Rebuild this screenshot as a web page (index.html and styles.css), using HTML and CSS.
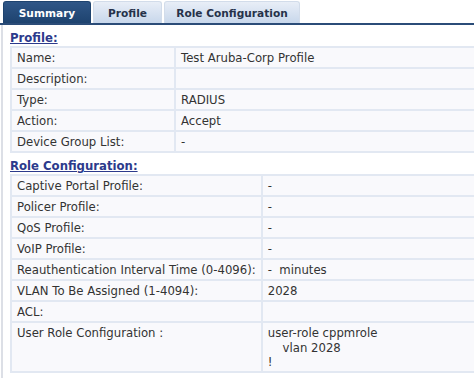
FILE: index.html
```html
<!DOCTYPE html>
<html>
<head>
<meta charset="utf-8">
<link rel="stylesheet" href="styles.css">
</head>
<body>
<div class="tabs">
  <div class="tab active tab-summary">Summary</div>
  <div class="tab tab-profile">Profile</div>
  <div class="tab tab-role">Role Configuration</div>
</div>
<div class="panel">
  <div class="section-title">Profile:</div>
  <table class="grid grid-profile">
    <tr><td class="label">Name:</td><td>Test Aruba-Corp Profile</td></tr>
    <tr><td class="label">Description:</td><td></td></tr>
    <tr><td class="label">Type:</td><td>RADIUS</td></tr>
    <tr><td class="label">Action:</td><td>Accept</td></tr>
    <tr><td class="label">Device Group List:</td><td>-</td></tr>
  </table>
  <div class="section-title">Role Configuration:</div>
  <table class="grid grid-role">
    <tr><td class="label">Captive Portal Profile:</td><td>-</td></tr>
    <tr><td class="label">Policer Profile:</td><td>-</td></tr>
    <tr><td class="label">QoS Profile:</td><td>-</td></tr>
    <tr><td class="label">VoIP Profile:</td><td>-</td></tr>
    <tr><td class="label">Reauthentication Interval Time (0-4096):</td><td>-&nbsp; minutes</td></tr>
    <tr><td class="label">VLAN To Be Assigned (1-4094):</td><td>2028</td></tr>
    <tr><td class="label">ACL:</td><td></td></tr>
    <tr class="tall"><td class="label">User Role Configuration :</td><td><pre class="config">user-role cppmrole
    vlan 2028
!</pre></td></tr>
  </table>
</div>
</body>
</html>
```
FILE: styles.css
```css
html, body {
  margin: 0;
  padding: 0;
  background: #ffffff;
  overflow: hidden;
}
body {
  font-family: "DejaVu Sans", Verdana, sans-serif;
  font-size: 11.7px;
  color: #333333;
  width: 474px;
  height: 378px;
}
.tabs {
  display: flex;
  gap: 2px;
  padding: 1px 0 0 3px;
  border-bottom: 2px solid #2b4c78;
  height: 22px;
}
.tab {
  display: flex;
  align-items: center;
  justify-content: center;
  font-size: 10.6px;
  font-weight: bold;
  color: #26324a;
  background: linear-gradient(#e8eef7, #c8d7eb);
  border: 1px solid #d2dcea;
  border-bottom: none;
  border-radius: 3px 3px 0 0;
}
.tab-summary { width: 86px; }
.tab-profile { width: 67px; }
.tab-role { width: 134px; }
.tab.active {
  background: linear-gradient(#2f5687, #1e436f);
  border-color: #1e436f;
  color: #ffffff;
}
.panel {
  margin-left: 1px;
  border-left: 2px solid #dcdfe6;
  padding: 7px 0 8px 7px;
}
.section-title {
  font-weight: bold;
  color: #2c3a8c;
  text-decoration: underline;
  line-height: 13px;
  margin-bottom: 1px;
}
.grid {
  border-collapse: collapse;
  width: 480px;
  background: #f9f9fc;
  margin-bottom: 7px;
}
.grid td {
  border: 2px solid #e2e8f2;
  height: 17px;
  padding: 1px 5px 1px 5px;
  vertical-align: middle;
  white-space: nowrap;
}
.grid-profile td.label { width: 152px; }
.grid-role td.label { width: 238px; }
.tall td {
  vertical-align: top;
  height: 44px;
  padding-top: 3px;
}
.config {
  margin: 0;
  font-family: inherit;
  font-size: 11.7px;
  line-height: 14.5px;
}
```
